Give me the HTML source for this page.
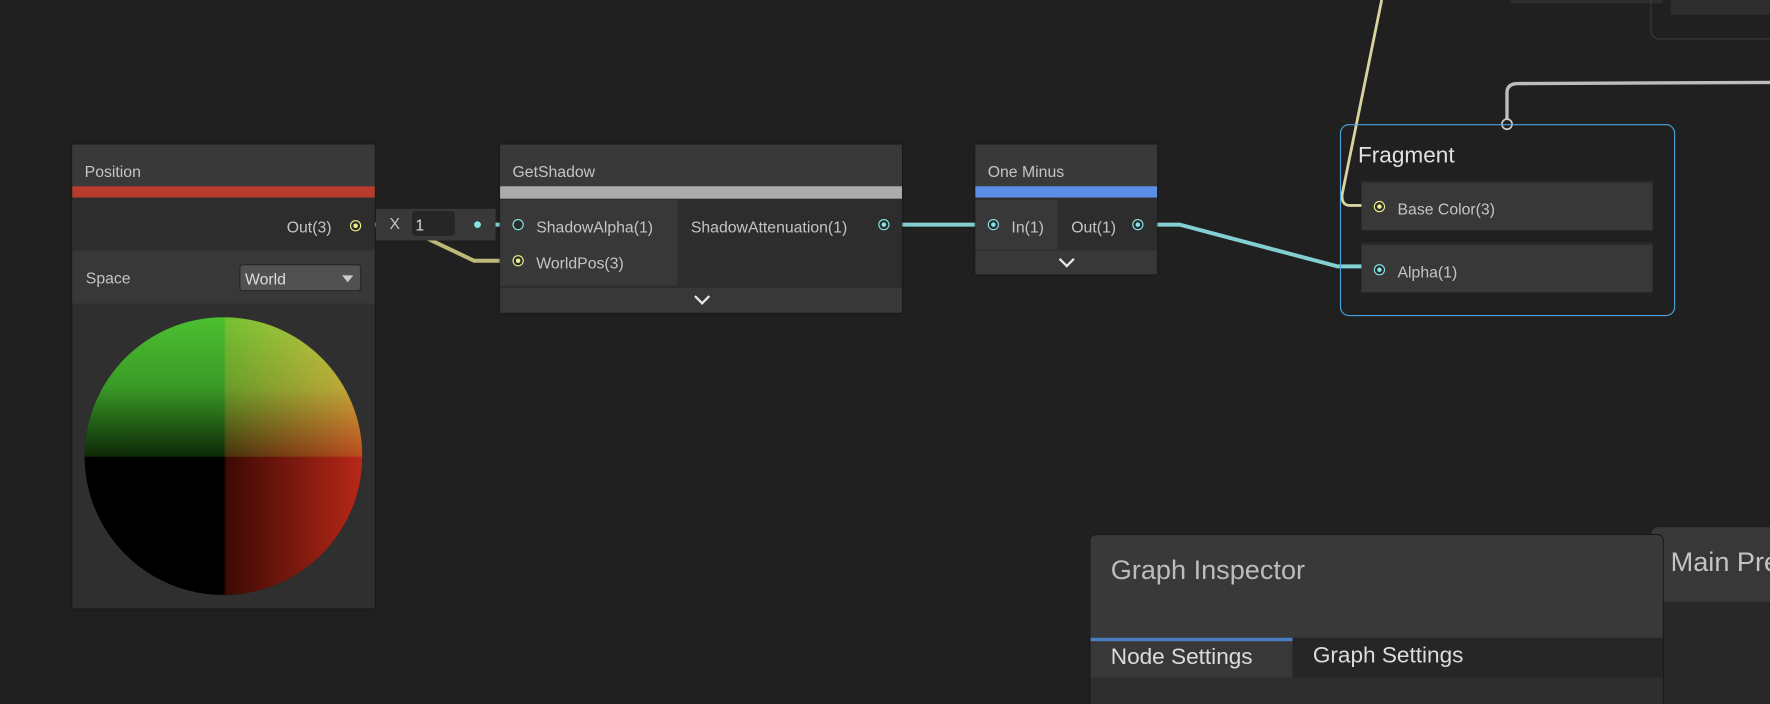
<!DOCTYPE html>
<html><head><meta charset="utf-8"><style>
html,body{margin:0;padding:0;background:#202020;width:1770px;height:704px;overflow:hidden}
#w{position:absolute;left:0;top:0;width:1568px;height:623.6px;overflow:hidden;transform:scale(1.12883);transform-origin:0 0;font-family:"Liberation Sans",sans-serif;color:#c4c4c4}
.a{position:absolute;box-sizing:border-box}
.t{font-size:14px;white-space:nowrap}
.port{position:absolute;width:10px;height:10px;border-radius:50%;box-sizing:border-box}
.y{border:1.5px solid #f0ee8c;background:#2a2a2a}
.y::after,.b::after{content:"";position:absolute;left:1.5px;top:1.5px;width:4px;height:4px;border-radius:50%}
.y::after{background:#f0ee8c}
.b{border:1.5px solid #84e4e7;background:#2a2a2a}
.b::after{background:#84e4e7}
.bo{border:1.5px solid #84e4e7;background:#2a2a2a}
.chev{position:absolute;width:8px;height:8px;border-right:2.5px solid #e8e8e8;border-bottom:2.5px solid #e8e8e8;transform:rotate(45deg)}
</style></head><body><div id="w">
<svg class="a" style="left:0;top:0" width="1568" height="624">
<path d="M316 199 L345 199 L360 199 L380 212 L420 231 L455 231" stroke="#d8d58a" stroke-width="3.5" fill="none" opacity=".85"/>
<path d="M427 199 L458 199" stroke="#84cfd2" stroke-width="3.5" fill="none"/>
<path d="M783 199 L868 199" stroke="#84cfd2" stroke-width="3.5" fill="none"/>
<path d="M1007 199 L1045 199 L1185 236 L1222 236" stroke="#84cfd2" stroke-width="3.5" fill="none"/>
<path d="M1222 182 L1196 182 Q1188 182 1189 172 L1224 0" stroke="#d8d4a0" stroke-width="2.5" fill="none"/>
<path d="M1335 110 L1335 82 Q1335 74 1345 74 L1568 73" stroke="#bdbdbd" stroke-width="3" fill="none"/>
<circle cx="1335" cy="110" r="4.5" fill="#202020" stroke="#ccc" stroke-width="1.5"/>
</svg>
<div class="a" style="left:1338px;top:0;width:135px;height:3px;background:#2e2e2e"></div>
<div class="a" style="left:1462px;top:-20px;width:130px;height:55px;border:1px solid #3a3a3a;border-radius:8px"></div>
<div class="a" style="left:1480px;top:0;width:90px;height:13px;background:#2e2e2e"></div>

<div class="a" style="left:64px;top:128px;width:268px;height:411px;background:#2f2f2f;box-shadow:0 0 2px #111">
 <div class="a" style="left:0;top:0;width:268px;height:37px;background:#393939"><span class="a t" style="left:11px;top:16px">Position</span></div>
 <div class="a" style="left:0;top:37px;width:268px;height:10px;background:#b83c2e"></div>
 <div class="a" style="left:0;top:47px;width:268px;height:46px;background:#2d2d2d"><span class="a t" style="left:190px;top:18px">Out(3)</span><div class="port y" style="left:246px;top:20px"></div></div>
 <div class="a" style="left:0;top:94px;width:268px;height:47px;background:#383838"><span class="a t" style="left:12px;top:16px">Space</span>
  <div class="a" style="left:148px;top:12px;width:108px;height:24px;background:#515151;border:1px solid #262626;border-radius:3px"><span class="a t" style="left:4px;top:4px;color:#ddd">World</span><span class="a" style="left:90px;top:9px;border-left:5px solid transparent;border-right:5px solid transparent;border-top:6px solid #ccc;width:0;height:0"></span></div></div>
 <div class="a" style="left:11px;top:153px;width:246px;height:246px;border-radius:50%;overflow:hidden;background:linear-gradient(#4cbf30 0%,#3a9a26 25%,#0e2a08 50%,#000 50.5%);isolation:isolate">
  <div class="a" style="left:0;top:0;width:246px;height:246px;background:linear-gradient(90deg,#000 50%,#3c0a04 51%,#b82818 100%);mix-blend-mode:screen"></div>
 </div>
</div>
<div class="a" style="left:333px;top:185px;width:106px;height:28px;background:#383838"><span class="a t" style="left:12px;top:5px">X</span><div class="a" style="left:32px;top:2px;width:38px;height:22px;background:#262626;border-radius:3px"><span class="a t" style="left:3px;top:4px;color:#ddd">1</span></div><div class="a" style="left:87px;top:11px;width:6px;height:6px;border-radius:50%;background:#84e4e7"></div></div>

<div class="a" style="left:443px;top:128px;width:356px;height:149px;background:#2d2d2d;box-shadow:0 0 2px #111">
 <div class="a" style="left:0;top:0;width:356px;height:37px;background:#393939"><span class="a t" style="left:11px;top:16px">GetShadow</span></div>
 <div class="a" style="left:0;top:37px;width:356px;height:11px;background:#acacac"></div>
 <div class="a" style="left:0;top:49px;width:157px;height:76px;background:#383838">
  <div class="port bo" style="left:11px;top:17px"></div><span class="a t" style="left:32px;top:16px">ShadowAlpha(1)</span>
  <div class="port y" style="left:11px;top:49px"></div><span class="a t" style="left:32px;top:48px">WorldPos(3)</span></div>
 <span class="a t" style="left:169px;top:65px">ShadowAttenuation(1)</span><div class="port b" style="left:335px;top:66px"></div>
 <div class="a" style="left:0;top:127px;width:356px;height:22px;background:#383838"><div class="chev" style="left:174px;top:3px"></div></div>
</div>

<div class="a" style="left:864px;top:128px;width:161px;height:115px;background:#2d2d2d;box-shadow:0 0 2px #111">
 <div class="a" style="left:0;top:0;width:161px;height:37px;background:#393939"><span class="a t" style="left:11px;top:16px">One Minus</span></div>
 <div class="a" style="left:0;top:37px;width:161px;height:10px;background:#5b8ee6"></div>
 <div class="a" style="left:0;top:49px;width:73px;height:44px;background:#383838"><div class="port b" style="left:11px;top:17px"></div><span class="a t" style="left:32px;top:16px">In(1)</span></div>
 <span class="a t" style="left:85px;top:65px">Out(1)</span><div class="port b" style="left:139px;top:66px"></div>
 <div class="a" style="left:0;top:94px;width:161px;height:21px;background:#383838"><div class="chev" style="left:76px;top:3px"></div></div>
</div>

<div class="a" style="left:1187px;top:110px;width:297px;height:170px;border:1.5px solid #4aa3e0;border-radius:8px">
 <span class="a" style="left:15px;top:16px;font-size:20px;color:#e0e0e0">Fragment</span>
 <div class="a" style="left:18px;top:49px;width:258px;height:44px;background:#383838;border-top:2px solid #2a2a2a"><div class="port y" style="left:11px;top:16px"></div><span class="a t" style="left:32px;top:15px">Base Color(3)</span></div>
 <div class="a" style="left:18px;top:104px;width:258px;height:44px;background:#383838;border-top:2px solid #2a2a2a"><div class="port b" style="left:11px;top:17px"></div><span class="a t" style="left:32px;top:16px">Alpha(1)</span></div>
</div>

<div class="a" style="left:1463px;top:467px;width:120px;height:170px;background:#282828;border-radius:6px;overflow:hidden">
 <div class="a" style="left:0;top:0;width:120px;height:66px;background:#383838"><span class="a" style="left:17px;top:18px;font-size:24px;color:#c4c4c4;white-space:nowrap">Main Preview</span></div>
</div>
<div class="a" style="left:965px;top:473px;width:509px;height:170px;background:#2e2e2e;border:1px solid #1a1a1a;border-radius:6px;overflow:hidden">
 <div class="a" style="left:0;top:0;width:509px;height:91px;background:#393939"><span class="a" style="left:18px;top:18px;font-size:24px;color:#bcbcbc">Graph Inspector</span></div>
 <div class="a" style="left:0;top:91px;width:509px;height:35px;background:#262626"></div>
 <div class="a" style="left:0;top:91px;width:179px;height:35px;background:#383838;border-top:3px solid #4a7fc1"><span class="a" style="left:18px;top:3px;font-size:20px;color:#dcdcdc">Node Settings</span></div>
 <span class="a" style="left:197px;top:96px;font-size:20px;color:#dcdcdc">Graph Settings</span>
</div>
</div></body></html>
